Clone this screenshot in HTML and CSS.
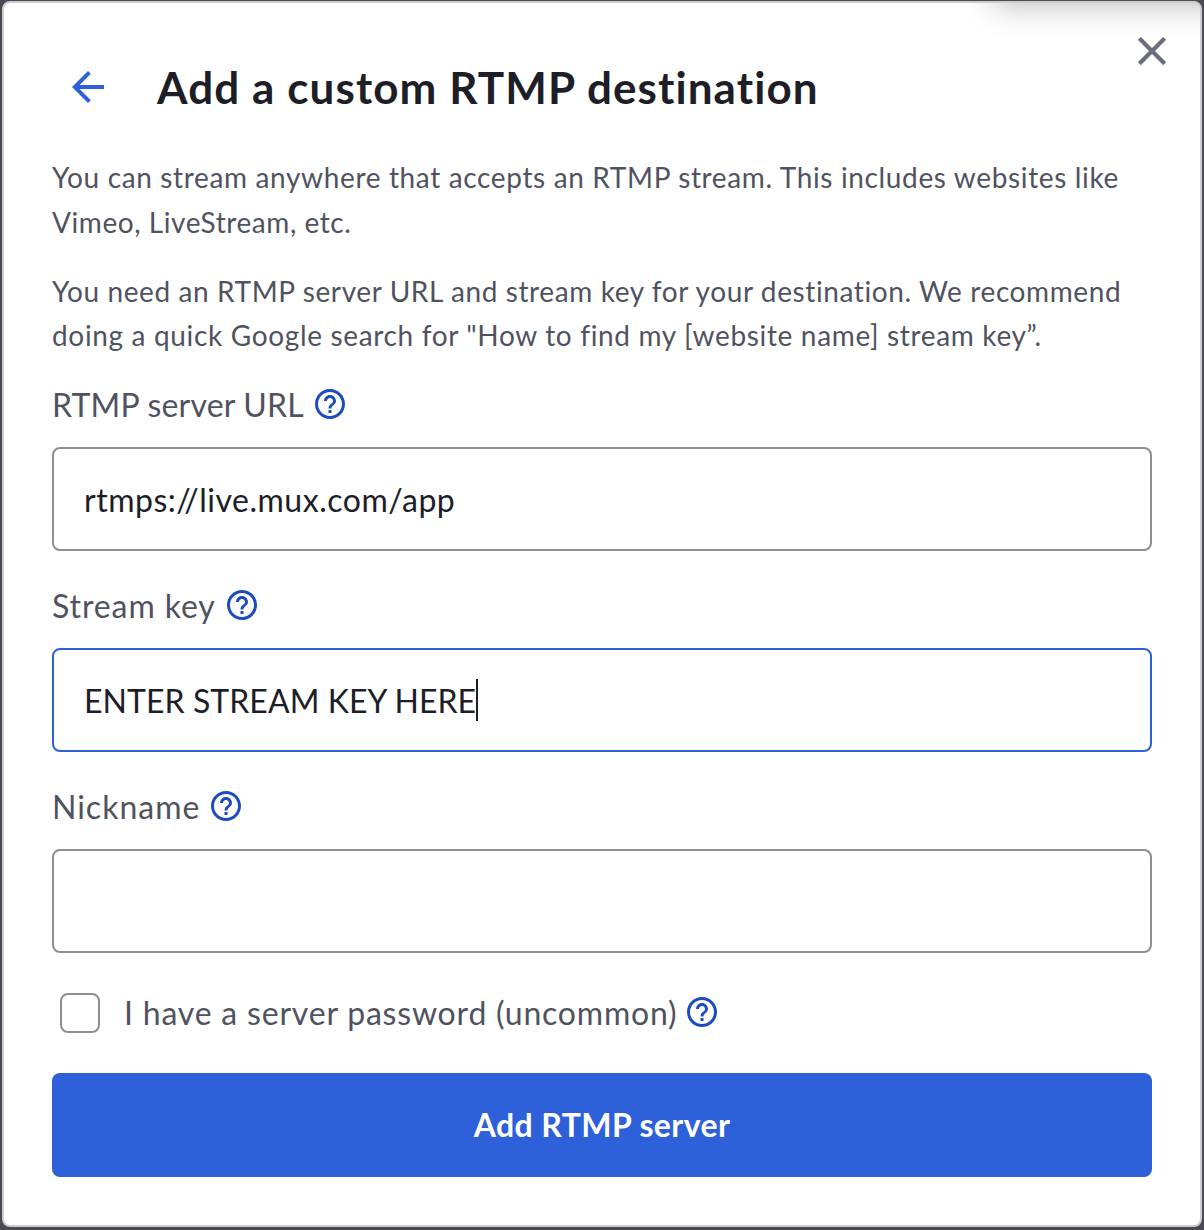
FILE: index.html
```html
<!DOCTYPE html>
<html lang="en">
<head>
    <meta charset="UTF-8">
    <meta name="viewport" content="width=device-width, initial-scale=1.0">
    <title>Add a custom RTMP destination</title>
    <link rel="stylesheet" href="styles.css">
</head>
<body>
    <svg class="symbols" xmlns="http://www.w3.org/2000/svg">
        <symbol id="help" viewBox="2 2 20 20">
            <path fill="currentColor" d="M11 18h2v-2h-2v2zm1-16C6.48 2 2 6.48 2 12s4.48 10 10 10 10-4.480 10-10S17.520 2 12 2zm0 18c-4.410 0-8-3.590-8-8s3.590-8 8-8 8 3.590 8 8-3.590 8-8 8zm0-14c-2.210 0-4 1.790-4 4h2c0-1.100.9-2 2-2s2 .9 2 2c0 2-3 1.750-3 5h2c0-2.250 3-2.500 3-5 0-2.210-1.790-4-4-4z"/>
        </symbol>
    </svg>

    <div class="modal">
        <div class="shade"></div>
        <button class="close" aria-label="Close">
            <svg width="28" height="28" viewBox="5 5 14 14"><path fill="currentColor" stroke="currentColor" stroke-width="0.15" d="M19 6.410L17.590 5 12 10.590 6.410 5 5 6.410 10.590 12 5 17.590 6.410 19 12 13.410 17.590 19 19 17.590 13.410 12z"/></svg>
        </button>

        <div class="header">
            <button class="back" aria-label="Back">
                <svg width="32" height="32" viewBox="4 4 16 16"><path fill="currentColor" d="M20 11H7.830l5.590-5.590L12 4l-8 8 8 8 1.410-1.410L7.830 13H20v-2z"/></svg>
            </button>
            <h1>Add a custom RTMP destination</h1>
        </div>

        <p><span class="line l1">You can stream anywhere that accepts an RTMP stream. This includes websites like</span> <span class="line l2">Vimeo, LiveStream, etc.</span></p>
        <p><span class="line l3">You need an RTMP server URL and stream key for your destination. We recommend</span> <span class="line l4">doing a quick Google search for "How to find my [website name] stream key”.</span></p>

        <form>
            <label class="label" for="url"><span class="text-url">RTMP server URL</span> <svg class="help"><use href="#help"/></svg></label>
            <input class="field" id="url" type="text" value="rtmps://live.mux.com/app">

            <label class="label"><span class="text-key">Stream key</span> <svg class="help"><use href="#help"/></svg></label>
            <div class="field focused"><span class="key-value">ENTER STREAM KEY HERE</span><span class="caret"></span></div>

            <label class="label" for="nickname"><span class="text-nick">Nickname</span> <svg class="help"><use href="#help"/></svg></label>
            <input class="field" id="nickname" type="text">

            <label class="check">
                <input class="checkbox" type="checkbox">
                <span class="text-check">I have a server password (uncommon)</span>
                <svg class="help"><use href="#help"/></svg>
            </label>

            <button class="submit" type="button">Add RTMP server</button>
        </form>
    </div>
</body>
</html>
```
FILE: styles.css
```css
* {
    box-sizing: border-box;
}
body {
    margin: 0;
    padding: 1px 2px 3px;
    height: 1230px;
    overflow: hidden;
    background: #4b4a52;
    font-family: Lato, "Liberation Sans", sans-serif;
    color: #50535f;
}
button {
    padding: 0;
    border: 0;
    background: none;
    font-family: inherit;
}
svg {
    display: block;
}
.symbols {
    display: none;
}
.modal {
    position: relative;
    height: 1226px;
    padding: 50px 48px 0;
    border: 2px solid #cdcdcf;
    border-radius: 8px;
    background: #fff;
    overflow: hidden;
}
/* shadow of the panel above the modal */
.shade {
    position: absolute;
    top: -42px;
    left: 994px;
    width: 260px;
    height: 40px;
    box-shadow: 0 0 32px 4px rgba(0, 0, 0, 0.28);
}
.close {
    position: absolute;
    top: 34px;
    right: 34px;
    color: #6b6e7c;
}
.header {
    display: flex;
    align-items: center;
    height: 68px;
    padding-left: 20px;
    gap: 53px;
}
.back {
    color: #2e60d9;
}
h1 {
    margin: 0;
    font-size: 44px;
    font-weight: 700;
    line-height: 68px;
    letter-spacing: 1.09px;
    white-space: nowrap;
    color: #1d1e27;
}
p {
    margin: 0 0 24px;
    font-size: 28px;
    line-height: 44.8px;
    white-space: nowrap;
}
.header + p {
    margin-top: 34px;
}
.line {
    display: block;
}
.l1 {
    letter-spacing: 0.645px;
}
.l2 {
    letter-spacing: 0.56px;
}
.l3 {
    letter-spacing: 0.605px;
}
.l4 {
    letter-spacing: 0.66px;
}
.label {
    display: flex;
    align-items: center;
    gap: 11px;
    height: 40px;
    margin: 34px 0 23px;
    font-size: 32px;
}
form {
    padding-top: 2px;
}
form .label:first-child {
    margin-top: 0;
}
.text-url {
    letter-spacing: 0.2px;
}
.text-key {
    letter-spacing: 0.9px;
}
.text-nick {
    letter-spacing: 1px;
}
.help {
    width: 30px;
    height: 30px;
    color: #1c4bc0;
}
.field {
    display: flex;
    align-items: center;
    width: 100%;
    height: 104px;
    padding: 0 30px;
    border: 2px solid #8d8d93;
    border-radius: 8px;
    outline: 0;
    background: #fff;
    font-family: inherit;
    font-size: 32px;
    letter-spacing: 0.52px;
    color: #1d1e27;
}
.focused {
    border-color: #2e60d9;
    letter-spacing: 0.06px;
}
.caret {
    width: 2px;
    height: 42px;
    background: #1d1e27;
}
.check {
    display: flex;
    align-items: center;
    height: 40px;
    margin: 40px 0;
    padding-left: 8px;
    font-size: 32px;
}
.checkbox {
    appearance: none;
    width: 40px;
    height: 40px;
    margin: 0 24px 0 0;
    border: 2px solid #8d8d8d;
    border-radius: 8px;
}
.text-check {
    padding-bottom: 2px;
    letter-spacing: 0.8px;
}
.check .help {
    margin: 0 0 2px 10px;
}
.submit {
    width: 100%;
    height: 104px;
    padding-bottom: 2px;
    border-radius: 8px;
    background: #2e60d9;
    font-size: 32px;
    font-weight: 700;
    letter-spacing: 0.4px;
    color: #fff;
}
```
